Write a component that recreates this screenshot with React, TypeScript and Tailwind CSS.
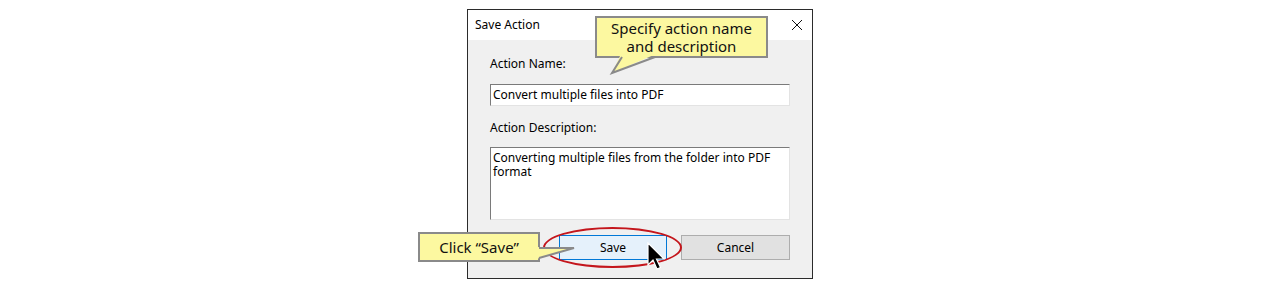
import React from "react";

const font = { fontFamily: '"Noto Sans", "Open Sans", sans-serif' };

function CloseIcon() {
  return (
    <svg width="12" height="12" viewBox="0 0 12 12" className="block">
      <path d="M1 1 L11 11 M11 1 L1 11" stroke="#111" strokeWidth="1" fill="none" />
    </svg>
  );
}

function Cursor() {
  return (
    <svg width="20" height="30" viewBox="-1 -1 20 30" className="absolute left-[647px] top-[242px]">
      <path
        d="M0 0 L0 22 L5 17 L9 26 L12.5 24.5 L8.5 16 L16 16 Z"
        fill="#000"
        stroke="#fff"
        strokeWidth="1.2"
        strokeLinejoin="miter"
      />
    </svg>
  );
}

export default function App() {
  return (
    <div className="relative h-[285px] w-[1280px] overflow-hidden bg-white" style={font}>
      <div className="ml-[467px] mt-[9px] flex w-[346px] flex-col border border-[#2b2b2b] bg-[#f0f0f0]">
        <div className="flex h-[30px] items-center justify-between bg-white pl-[7px] pr-[9px]">
          <span className="text-[12px] text-black">Save Action</span>
          <CloseIcon />
        </div>

        <div className="flex flex-col px-[22px] pb-[18px] pt-[16px] text-[12px] leading-[16px] text-black">
          <span>Action Name:</span>
          <div className="mt-[12px] flex h-[22px] items-center border border-b-[#e3e3e3] border-l-[#7a7a7a] border-r-[#e3e3e3] border-t-[#7a7a7a] bg-white px-[2px]">
            Convert multiple files into PDF
          </div>

          <span className="mt-[14px]">Action Description:</span>
          <div className="mt-[11px] h-[73px] border border-b-[#e3e3e3] border-l-[#7a7a7a] border-r-[#e3e3e3] border-t-[#7a7a7a] bg-white px-[2px] pt-[3px] leading-[14px]">
            Converting multiple files from the folder into PDF format
          </div>

          <div className="mt-[15px] flex justify-end gap-[14px]">
            <button className="flex h-[25px] w-[108px] items-center justify-center border border-[#0078d7] bg-[#e5f1fb] text-[12px]">
              Save
            </button>
            <button className="flex h-[25px] w-[109px] items-center justify-center border border-[#adadad] bg-[#e1e1e1] text-[12px]">
              Cancel
            </button>
          </div>
        </div>
      </div>

      {/* red highlight ring */}
      <div className="absolute left-[543px] top-[227px] h-[41px] w-[139px] rounded-[50%] border-2 border-[#c4161c]" />

      {/* top callout */}
      <div className="absolute left-[595px] top-[16px] flex h-[42px] w-[173px] flex-col items-center justify-center border-2 border-[#8a8a8a] bg-[#fcf8a0] text-[15px] leading-[18px] text-[#111]">
        <span>Specify action name</span>
        <span>and description</span>
      </div>
      <svg width="60" height="30" viewBox="0 0 60 30" className="absolute left-[600px] top-[50px]">
        <polygon points="21,4 56,4 12,23" fill="#fcf8a0" />
        <polyline points="22,7 12,23 55,7" fill="none" stroke="#8a8a8a" strokeWidth="2" />
      </svg>

      {/* bottom callout */}
      <div className="absolute left-[418px] top-[232px] flex h-[30px] w-[122px] items-center justify-center border-2 border-[#8a8a8a] bg-[#fcf8a0] text-[15px] text-[#111]">
        Click “Save”
      </div>
      <svg width="50" height="24" viewBox="0 0 50 24" className="absolute left-[530px] top-[240px]">
        <polygon points="6,7 6,19 44,8" fill="#fcf8a0" />
        <polyline points="9,8 44,8 9,18" fill="none" stroke="#8a8a8a" strokeWidth="2" />
      </svg>

      <Cursor />
    </div>
  );
}
